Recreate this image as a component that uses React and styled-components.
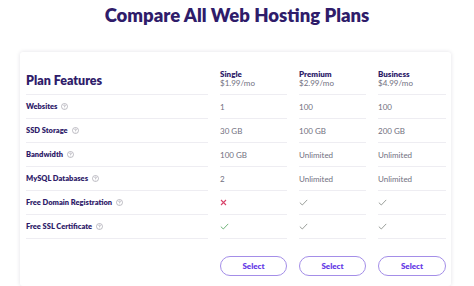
import { Fragment } from "react";
import styled, { createGlobalStyle } from "styled-components";

const GlobalStyle = createGlobalStyle`
  html, body {
    margin: 0;
    padding: 0;
    background: #ffffff;
    font-family: "Lato", "Noto Sans", sans-serif;
    overflow: hidden;
  }
`;

const Page = styled.div`
  width: 474px;
  height: 286px;
  display: flex;
  flex-direction: column;
  align-items: center;
  padding-top: 3px;
  box-sizing: border-box;
`;

const Title = styled.h1`
  margin: 0;
  font-size: 18.5px;
  font-weight: 800;
  color: #2f1c6a;
  letter-spacing: 0;
  line-height: 24px;
`;

const Card = styled.div`
  margin-top: 25px;
  align-self: flex-start;
  margin-left: 20px;
  width: 431px;
  flex: 1;
  background: #fff;
  border-radius: 3px;
  box-shadow: 0 0 4px rgba(30, 20, 60, 0.13);
  padding: 14px 0 0 6px;
  box-sizing: border-box;
`;

const Grid = styled.div`
  display: grid;
  grid-template-columns: 182px 67px 67px 68px;
  column-gap: 12px;
`;

const Cell = styled.div`
  height: 24px;
  display: flex;
  align-items: center;
  border-bottom: 1px solid #eeedf2;
  box-sizing: border-box;
  font-size: 8px;
  color: #717080;
`;

const HeadCell = styled(Cell)`
  height: 29px;
  align-items: flex-end;
  padding-bottom: 6px;
`;

const Features = styled.div`
  font-size: 12.5px;
  font-weight: 800;
  color: #2f1c6a;
  line-height: 14px;
`;

const PlanName = styled.div`
  font-size: 8px;
  font-weight: 800;
  color: #2f1c6a;
  line-height: 9px;
`;

const PlanPrice = styled.div`
  font-size: 8px;
  color: #717080;
  line-height: 9px;
`;

const Label = styled.span`
  font-size: 7.5px;
  font-weight: 800;
  color: #2f1c6a;
  display: flex;
  align-items: center;
  gap: 4px;
`;

const Hint = styled.svg`
  width: 7px;
  height: 7px;
`;

const ButtonCell = styled.div`
  padding-top: 14px;
`;

const SelectButton = styled.button`
  width: 100%;
  height: 20px;
  border: 1px solid #a48ee8;
  border-radius: 10px;
  background: #fff;
  color: #673de6;
  font-family: inherit;
  font-size: 8px;
  font-weight: 800;
  padding: 0;
  cursor: pointer;
`;

const HintIcon = () => (
  <Hint viewBox="0 0 10 10">
    <circle cx="5" cy="5" r="4.3" fill="none" stroke="#9a99a4" strokeWidth="0.9" />
    <path
      d="M3.7 4 Q3.7 2.9 5 2.9 Q6.3 2.9 6.3 4 Q6.3 4.7 5 5.1 L5 5.9"
      fill="none"
      stroke="#9a99a4"
      strokeWidth="0.9"
    />
    <circle cx="5" cy="7.2" r="0.5" fill="#9a99a4" />
  </Hint>
);

const Check = ({ color }) => (
  <svg width="9" height="7" viewBox="0 0 9 7">
    <path d="M0.8 3.6 L3.3 6 L8.2 0.9" fill="none" stroke={color} strokeWidth="0.9" />
  </svg>
);

const Cross = () => (
  <svg width="7" height="7" viewBox="0 0 7 7">
    <path d="M1 1 L6 6 M6 1 L1 6" fill="none" stroke="#d8436a" strokeWidth="1.1" />
  </svg>
);

const plans = [
  { name: "Single", price: "$1.99/mo" },
  { name: "Premium", price: "$2.99/mo" },
  { name: "Business", price: "$4.99/mo" },
];

const rows = [
  { label: "Websites", values: ["1", "100", "100"] },
  { label: "SSD Storage", values: ["30 GB", "100 GB", "200 GB"] },
  { label: "Bandwidth", values: ["100 GB", "Unlimited", "Unlimited"] },
  { label: "MySQL Databases", values: ["2", "Unlimited", "Unlimited"] },
  { label: "Free Domain Registration", values: ["no", "yes", "yes"] },
  { label: "Free SSL Certificate", values: ["yes-green", "yes", "yes"] },
];

function renderValue(v) {
  if (v === "no") return <Cross />;
  if (v === "yes") return <Check color="#8f948f" />;
  if (v === "yes-green") return <Check color="#62ad6c" />;
  return v;
}

export default function App() {
  return (
    <>
      <GlobalStyle />
      <Page>
        <Title>Compare All Web Hosting Plans</Title>
        <Card>
          <Grid>
            <HeadCell>
              <Features>Plan Features</Features>
            </HeadCell>
            {plans.map((p) => (
              <HeadCell key={p.name}>
                <div>
                  <PlanName>{p.name}</PlanName>
                  <PlanPrice>{p.price}</PlanPrice>
                </div>
              </HeadCell>
            ))}
            {rows.map((r) => (
              <Fragment key={r.label}>
                <Cell>
                  <Label>
                    {r.label}
                    <HintIcon />
                  </Label>
                </Cell>
                {r.values.map((v, i) => (
                  <Cell key={i}>{renderValue(v)}</Cell>
                ))}
              </Fragment>
            ))}
            <div />
            {plans.map((p) => (
              <ButtonCell key={p.name}>
                <SelectButton>Select</SelectButton>
              </ButtonCell>
            ))}
          </Grid>
        </Card>
      </Page>
    </>
  );
}
